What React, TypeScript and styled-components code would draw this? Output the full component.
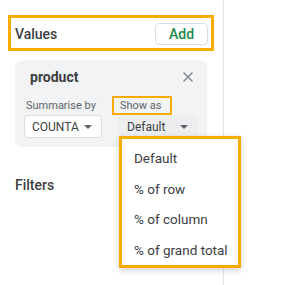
import React from 'react';
import styled, { createGlobalStyle } from 'styled-components';

const GlobalStyle = createGlobalStyle`
    html, body {
        margin: 0;
        padding: 0;
        background: #ffffff;
    }
    body {
        font-family: Roboto, 'Liberation Sans', Arial, sans-serif;
        color: #3c4043;
    }
`;

const highlight = '#f9ab00';

const Page = styled.div`
    position: relative;
    width: 300px;
    height: 285px;
    overflow: hidden;
    display: flex;
`;

const Panel = styled.div`
    width: 224px;
    height: 100%;
    border-right: 1px solid #e3e5e8;
    box-sizing: border-box;
    padding-top: 15px;
    display: flex;
    flex-direction: column;
`;

const SectionHeader = styled.div`
    margin-left: 8px;
    width: 206px;
    height: 36px;
    box-sizing: border-box;
    border: 3px solid ${highlight};
    display: flex;
    align-items: center;
    justify-content: space-between;
    padding: 1px 3px 0 4px;
`;

const SectionTitle = styled.span`
    font-size: 14px;
    font-weight: 500;
    color: #3c4043;
`;

const AddButton = styled.button`
    width: 53px;
    height: 22px;
    box-sizing: border-box;
    border: 1px solid #dadce0;
    border-radius: 4px;
    background: #ffffff;
    color: #1a8a4a;
    font-family: inherit;
    font-size: 14px;
    font-weight: 500;
    padding: 0;
`;

const Card = styled.div`
    position: relative;
    margin: 9px 0 0 15px;
    width: 192px;
    height: 87px;
    box-sizing: border-box;
    background: #f1f3f4;
    border-radius: 8px;
    padding: 6px 9px 0 9px;
`;

const CardHead = styled.div`
    display: flex;
    align-items: center;
    justify-content: space-between;
    height: 22px;
    padding: 0 4px 0 6px;
`;

const FieldName = styled.span`
    font-size: 14px;
    font-weight: 700;
    color: #3c4043;
`;

const Controls = styled.div`
    display: grid;
    grid-template-columns: 78px 80px;
    column-gap: 16px;
    margin-top: 8px;
`;

const Field = styled.div`
    display: flex;
    flex-direction: column;
`;

const Label = styled.span<{ $boxed?: boolean }>`
    height: 19px;
    box-sizing: border-box;
    font-size: 11px;
    color: #5f6368;
    display: flex;
    align-items: center;
    padding-left: ${(p) => (p.$boxed ? '6px' : '2px')};
    ${(p) =>
        p.$boxed &&
        `
        width: 60px;
        margin-left: -6px;
        border: 2px solid ${highlight};
    `}
`;

const Select = styled.div<{ $flat?: boolean }>`
    height: 23px;
    box-sizing: border-box;
    border-radius: 4px;
    border: 1px solid ${(p) => (p.$flat ? 'transparent' : '#dadce0')};
    background: ${(p) => (p.$flat ? '#eceef0' : '#ffffff')};
    display: flex;
    align-items: center;
    justify-content: space-between;
    padding: 0 9px 0 ${(p) => (p.$flat ? '8px' : '7px')};
    font-size: 12px;
    color: #3c4043;
`;

const Caret = styled.span`
    width: 0;
    height: 0;
    border-left: 4px solid transparent;
    border-right: 4px solid transparent;
    border-top: 4px solid #5f6368;
`;

const Menu = styled.div`
    position: absolute;
    left: 104px;
    top: 76px;
    width: 122px;
    height: 132px;
    box-sizing: border-box;
    background: #ffffff;
    border: 3px solid ${highlight};
    box-shadow: 0 2px 6px rgba(60, 64, 67, 0.25);
    display: flex;
    flex-direction: column;
    justify-content: center;
    padding: 4px 0 0 12px;
    z-index: 2;
`;

const MenuItem = styled.div`
    height: 30.5px;
    display: flex;
    align-items: center;
    font-size: 13.5px;
    color: #3c4043;
`;

const SubTitle = styled.div`
    margin: 30px 0 0 15px;
    font-size: 14px;
    font-weight: 500;
    color: #3c4043;
`;

const CloseIcon = () => (
    <svg width="12" height="12" viewBox="0 0 12 12">
        <path d="M1.5 1.5 L10.5 10.5 M10.5 1.5 L1.5 10.5" stroke="#80868b" strokeWidth="1.4" fill="none" />
    </svg>
);

const menuOptions = ['Default', '% of row', '% of column', '% of grand total'];

const App: React.FC = () => {
    return (
        <>
            <GlobalStyle />
            <Page>
                <Panel>
                    <SectionHeader>
                        <SectionTitle>Values</SectionTitle>
                        <AddButton>Add</AddButton>
                    </SectionHeader>
                    <Card>
                        <CardHead>
                            <FieldName>product</FieldName>
                            <CloseIcon />
                        </CardHead>
                        <Controls>
                            <Field>
                                <Label>Summarise by</Label>
                                <Select>
                                    COUNTA
                                    <Caret />
                                </Select>
                            </Field>
                            <Field>
                                <Label $boxed>Show as</Label>
                                <Select $flat>
                                    Default
                                    <Caret />
                                </Select>
                            </Field>
                        </Controls>
                        <Menu>
                            {menuOptions.map((option) => (
                                <MenuItem key={option}>{option}</MenuItem>
                            ))}
                        </Menu>
                    </Card>
                    <SubTitle>Filters</SubTitle>
                </Panel>
            </Page>
        </>
    );
};

export default App;
